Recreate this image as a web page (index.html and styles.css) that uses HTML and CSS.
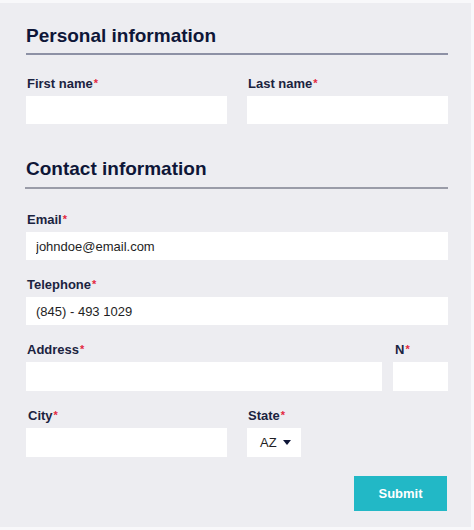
FILE: index.html
```html
<!DOCTYPE html>
<html lang="en">
<head>
<meta charset="utf-8">
<title>Form</title>
<link rel="stylesheet" href="styles.css">
</head>
<body>
<form class="panel">
  <section class="section">
    <h2 class="section-title">Personal information</h2>
    <div class="row row-half">
      <label class="field">
        <span class="label">First name<span class="req">*</span></span>
        <input class="input" type="text">
      </label>
      <label class="field">
        <span class="label">Last name<span class="req">*</span></span>
        <input class="input" type="text">
      </label>
    </div>
  </section>

  <section class="section section-contact">
    <h2 class="section-title title-contact">Contact information</h2>
    <div class="rows">
      <label class="field">
        <span class="label">Email<span class="req">*</span></span>
        <input class="input" type="text" value="johndoe@email.com">
      </label>
      <label class="field">
        <span class="label">Telephone<span class="req">*</span></span>
        <input class="input" type="text" value="(845) - 493 1029">
      </label>
      <div class="row row-address">
        <label class="field">
          <span class="label">Address<span class="req">*</span></span>
          <input class="input" type="text">
        </label>
        <label class="field">
          <span class="label label-n">N<span class="req">*</span></span>
          <input class="input" type="text">
        </label>
      </div>
      <div class="row row-half">
        <label class="field">
          <span class="label label-city">City<span class="req">*</span></span>
          <input class="input" type="text">
        </label>
        <div class="field">
          <span class="label label-state">State<span class="req">*</span></span>
          <div class="select">AZ<span class="caret"></span></div>
        </div>
      </div>
    </div>
  </section>

  <div class="actions">
    <button class="submit" type="button">Submit</button>
  </div>
</form>
</body>
</html>
```

FILE: styles.css
```css
html, body {
  margin: 0;
  padding: 0;
  background: #f8f8fa;
}

body {
  padding: 3px 3px 3px 0;
  font-family: "Liberation Sans", Arial, Helvetica, sans-serif;
  color: #1b2340;
}

.panel {
  width: 471px;
  box-sizing: border-box;
  background: #ededf1;
  padding: 21px 23px 16px 26px;
  display: flex;
  flex-direction: column;
  margin: 0;
}

.section {
  display: flex;
  flex-direction: column;
}

.section-contact {
  margin-top: 33px;
}

.section-title {
  margin: 0;
  font-size: 19px;
  line-height: 24px;
  font-weight: bold;
  color: #0e1638;
  padding-bottom: 5px;
  border-bottom: 2px solid #8d91a5;
}

.title-contact {
  padding-bottom: 6px;
  margin-left: -1px;
  padding-left: 1px;
  border-bottom-color: #9a9ca8;
}

.row {
  display: grid;
  column-gap: 20px;
}

.row-half {
  grid-template-columns: 201px 201px;
}

.section > .row-half {
  margin-top: 21px;
}

.row-address {
  grid-template-columns: 1fr 55px;
  column-gap: 11px;
}

.rows {
  margin-top: 23px;
  display: flex;
  flex-direction: column;
  gap: 17px;
}

.field {
  display: flex;
  flex-direction: column;
  gap: 4px;
}

.label {
  display: block;
  height: 16px;
  font-size: 13px;
  line-height: 16px;
  font-weight: bold;
  color: #1b2340;
  padding-left: 1px;
}

.label-city {
  padding-left: 2px;
}

.label-n {
  padding-left: 2px;
}

.req {
  color: #e3283f;
  font-size: 11px;
  line-height: 0;
  vertical-align: 1px;
  margin-left: 1px;
}

.input {
  display: block;
  box-sizing: border-box;
  width: 100%;
  height: 28px;
  margin: 0;
  border: none;
  outline: none;
  background: #ffffff;
  padding: 0 10px;
  font-family: "Liberation Sans", Arial, Helvetica, sans-serif;
  font-size: 13px;
  color: #1e1e24;
}

.row-half .field .input {
  height: 29px;
}

.section > .row-half .field .input {
  height: 28px;
}

.row-address .input {
  height: 29px;
}

.select {
  box-sizing: border-box;
  width: 54px;
  height: 29px;
  background: #ffffff;
  padding-left: 13px;
  display: flex;
  align-items: center;
  font-size: 13px;
  color: #1e1e24;
}

.caret {
  width: 0;
  height: 0;
  margin-left: 6px;
  border-left: 4px solid transparent;
  border-right: 4px solid transparent;
  border-top: 5px solid #0e1638;
}

.actions {
  display: flex;
  justify-content: flex-end;
  margin-top: 19px;
  padding-right: 1px;
}

.submit {
  width: 93px;
  height: 35px;
  border: none;
  margin: 0;
  background: #22b8c6;
  color: #ffffff;
  font-family: "Liberation Sans", Arial, Helvetica, sans-serif;
  font-size: 13px;
  font-weight: bold;
  cursor: pointer;
}
```
